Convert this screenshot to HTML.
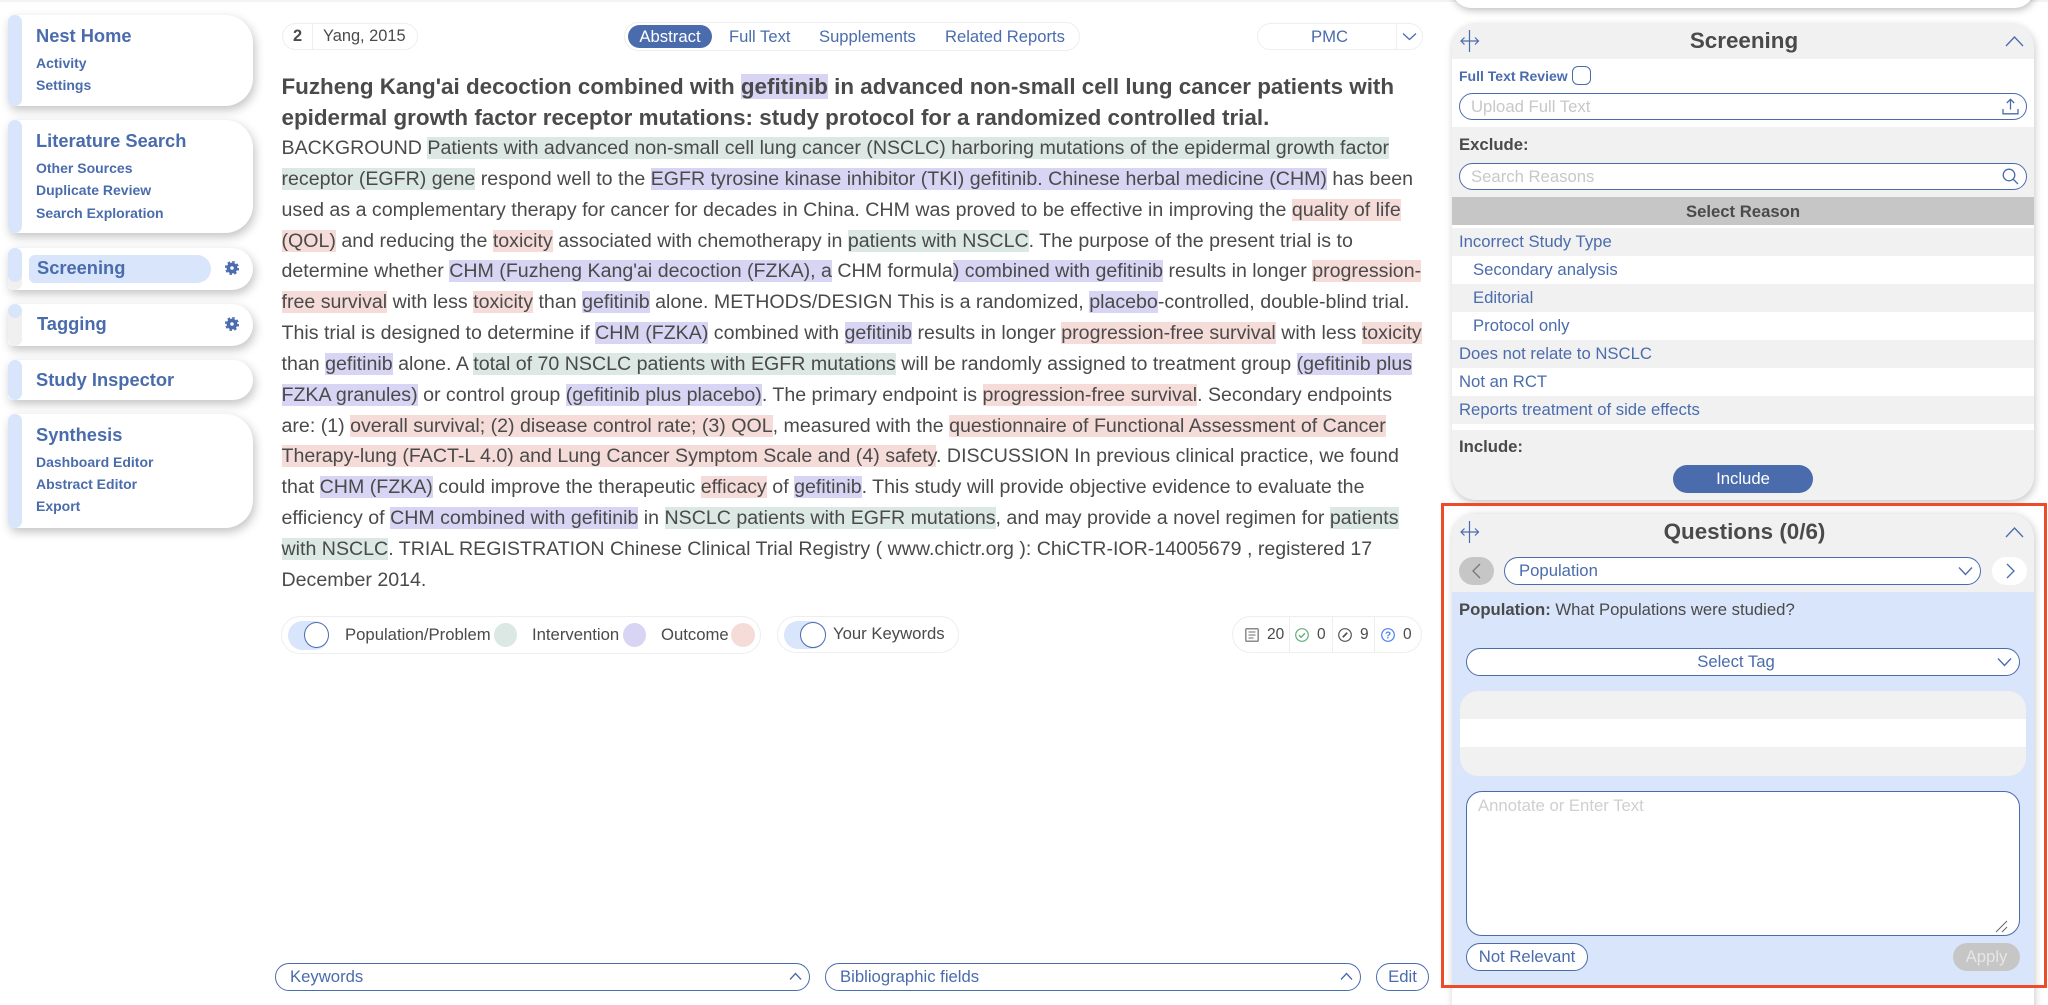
<!DOCTYPE html>
<html><head><meta charset="utf-8"><title>Screening</title>
<style>
html,body{margin:0;padding:0;background:#fff}
#p{position:relative;width:2048px;height:1005px;overflow:hidden;background:#fff;font-family:"Liberation Sans",sans-serif;color:#4a4a4a}
.a{position:absolute;white-space:nowrap;box-sizing:border-box}
.card{background:#fff;border-radius:7px 28px 28px 7px;box-shadow:2px 4px 10px rgba(0,0,0,.24);left:8px;width:245px}
.st{left:8px;width:14px;background:#d9e5fb;border-radius:7px}
.h{left:36px;color:#4a6cad;font-weight:bold;font-size:18.3px;line-height:24px;height:24px}
.s{left:36px;color:#4a6cad;font-weight:bold;font-size:14px;line-height:20px;height:20px}
.t{font-size:19.6px;line-height:30.85px}
.t div{height:30.85px;white-space:nowrap}
.g{background:#dbe8e3}.u{background:#d8d4f3}.r{background:#f5dcd9}
.pill{border:1px solid #eee;border-radius:20px;background:#fff}
.in{border:2px solid #4a6cad;background:#fff;border-radius:16px;color:#4a6cad}
.blue{color:#4a6cad}
.row{left:1452px;width:582px;height:28px;line-height:28px;font-size:16.7px;color:#4a6cad;padding-left:7px}
.gr{background:#f1f1f1}
svg{position:absolute;overflow:visible;fill:none}
</style></head><body><div id="p">
<div class="a" style="left:0;top:0;width:2048px;height:2px;background:#f3f3f3"></div>

<!-- sidebar -->
<div class="a card" style="top:15px;height:91px"></div><div class="a st" style="top:15px;height:91px"></div>
<div class="a h" style="top:24px">Nest Home</div>
<div class="a s" style="top:53px">Activity</div><div class="a s" style="top:75px">Settings</div>

<div class="a card" style="top:120px;height:113px"></div><div class="a st" style="top:120px;height:113px"></div>
<div class="a h" style="top:129px">Literature Search</div>
<div class="a s" style="top:158px">Other Sources</div><div class="a s" style="top:180px">Duplicate Review</div><div class="a s" style="top:203px">Search Exploration</div>

<div class="a card" style="top:248px;height:42px"></div>
<div class="a" style="left:8px;top:248px;width:14px;height:42px;border-radius:7px;background:#f0f0f0"></div>
<div class="a st" style="top:248px;height:34px"></div>
<div class="a" style="left:29px;top:255px;width:182px;height:28px;background:#d9e5fb;border-radius:6px 14px 14px 6px"></div>
<div class="a h" style="left:37px;top:256px">Screening</div>

<div class="a card" style="top:304px;height:42px"></div>
<div class="a" style="left:8px;top:304px;width:14px;height:42px;border-radius:7px;background:#f0f0f0"></div>
<div class="a st" style="top:304px;height:14px"></div>
<div class="a h" style="left:37px;top:312px">Tagging</div>

<div class="a card" style="top:360px;height:40px"></div><div class="a st" style="top:360px;height:40px"></div>
<div class="a h" style="top:368px">Study Inspector</div>

<div class="a card" style="top:414px;height:114px"></div><div class="a st" style="top:414px;height:114px"></div>
<div class="a h" style="top:423px">Synthesis</div>
<div class="a s" style="top:452px">Dashboard Editor</div><div class="a s" style="top:474px">Abstract Editor</div><div class="a s" style="top:496px">Export</div>

<svg style="left:225px;top:261px" width="14" height="14" viewBox="0 0 14 14"><circle cx="7" cy="7" r="3.6" stroke="#4a6cad" stroke-width="3.6"/><circle cx="7" cy="7" r="6.2" stroke="#4a6cad" stroke-width="1.7" stroke-dasharray="2.6 2.27"/></svg>
<svg style="left:225px;top:317px" width="14" height="14" viewBox="0 0 14 14"><circle cx="7" cy="7" r="3.6" stroke="#4a6cad" stroke-width="3.6"/><circle cx="7" cy="7" r="6.2" stroke="#4a6cad" stroke-width="1.7" stroke-dasharray="2.6 2.27"/></svg>

<!-- header of main -->
<div class="a pill" style="left:282px;top:23px;width:136px;height:27px"></div>
<div class="a" style="left:312px;top:24px;width:1px;height:25px;background:#eee"></div>
<div class="a" style="left:293px;top:23px;line-height:27px;font-size:16.4px;font-weight:bold">2</div>
<div class="a" style="left:323px;top:23px;line-height:27px;font-size:16.4px">Yang, 2015</div>

<div class="a pill" style="left:624px;top:22px;width:456px;height:29px"></div>
<div class="a" style="left:628px;top:25px;width:84px;height:23px;background:#4a6cad;border-radius:12px;color:#fff;font-size:16.7px;line-height:23px;text-align:center">Abstract</div>
<div class="a blue" style="left:729px;top:22px;line-height:29px;font-size:16.6px">Full Text</div>
<div class="a blue" style="left:819px;top:22px;line-height:29px;font-size:16.6px">Supplements</div>
<div class="a blue" style="left:945px;top:22px;line-height:29px;font-size:16.6px">Related Reports</div>

<div class="a pill" style="left:1257px;top:23px;width:166px;height:27px"></div>
<div class="a" style="left:1396px;top:24px;width:1px;height:25px;background:#eee"></div>
<div class="a blue" style="left:1311px;top:23px;line-height:27px;font-size:16.7px">PMC</div>
<svg style="left:1402px;top:32px" width="15" height="9" viewBox="0 0 15 9"><path d="M1 1.5L7.5 7.5L14 1.5" stroke="#4a6cad" stroke-width="1.3"/></svg>

<!-- title -->
<div class="a" style="left:281.5px;top:71px;font-size:22.4px;font-weight:bold;line-height:31px">Fuzheng Kang'ai decoction combined with <span class="u">gefitinib</span> in advanced non-small cell lung cancer patients with<br>epidermal growth factor receptor mutations: study protocol for a randomized controlled trial.</div>

<!-- body -->
<div class="a t" style="left:281.5px;top:133px">
<div>BACKGROUND <span class="g">Patients with advanced non-small cell lung cancer (NSCLC) harboring mutations of the epidermal growth factor</span></div>
<div><span class="g">receptor (EGFR) gene</span> respond well to the <span class="u">EGFR tyrosine kinase inhibitor (TKI) gefitinib. Chinese herbal medicine (CHM)</span> has been</div>
<div>used as a complementary therapy for cancer for decades in China. CHM was proved to be effective in improving the <span class="r">quality of life</span></div>
<div><span class="r">(QOL)</span> and reducing the <span class="r">toxicity</span> associated with chemotherapy in <span class="g">patients with NSCLC</span>. The purpose of the present trial is to</div>
<div>determine whether <span class="u">CHM (Fuzheng Kang'ai decoction (FZKA), a</span> CHM formula<span class="u">) combined with gefitinib</span> results in longer <span class="r">progression-</span></div>
<div><span class="r">free survival</span> with less <span class="r">toxicity</span> than <span class="u">gefitinib</span> alone. METHODS/DESIGN This is a randomized, <span class="u">placebo</span>-controlled, double-blind trial.</div>
<div>This trial is designed to determine if <span class="u">CHM (FZKA)</span> combined with <span class="u">gefitinib</span> results in longer <span class="r">progression-free survival</span> with less <span class="r">toxicity</span></div>
<div>than <span class="u">gefitinib</span> alone. A <span class="g">total of 70 NSCLC patients with EGFR mutations</span> will be randomly assigned to treatment group <span class="u">(gefitinib plus</span></div>
<div><span class="u">FZKA granules)</span> or control group <span class="u">(gefitinib plus placebo)</span>. The primary endpoint is <span class="r">progression-free survival</span>. Secondary endpoints</div>
<div>are: (1) <span class="r">overall survival; (2) disease control rate; (3) QOL</span>, measured with the <span class="r">questionnaire of Functional Assessment of Cancer</span></div>
<div><span class="r">Therapy-lung (FACT-L 4.0) and Lung Cancer Symptom Scale and (4) safety</span>. DISCUSSION In previous clinical practice, we found</div>
<div>that <span class="u">CHM (FZKA)</span> could improve the therapeutic <span class="r">efficacy</span> of <span class="u">gefitinib</span>. This study will provide objective evidence to evaluate the</div>
<div>efficiency of <span class="u">CHM combined with gefitinib</span> in <span class="g">NSCLC patients with EGFR mutations</span>, and may provide a novel regimen for <span class="g">patients</span></div>
<div><span class="g">with NSCLC</span>. TRIAL REGISTRATION Chinese Clinical Trial Registry ( www.chictr.org ): ChiCTR-IOR-14005679 , registered 17</div>
<div>December 2014.</div>
</div>

<!-- toggles -->
<div class="a pill" style="left:281px;top:616px;width:480px;height:38px"></div>
<div class="a" style="left:288px;top:621px;width:41px;height:29px;background:#d9e5fb;border-radius:15px"></div>
<div class="a" style="left:304px;top:622px;width:25px;height:26px;background:#fff;border:1.5px solid #4a6cad;border-radius:50%"></div>
<div class="a" style="left:345px;top:621px;line-height:28px;font-size:16.7px">Population/Problem</div>
<div class="a g" style="left:494px;top:623px;width:23px;height:24px;border-radius:50%"></div>
<div class="a" style="left:532px;top:621px;line-height:28px;font-size:16.7px">Intervention</div>
<div class="a u" style="left:623px;top:623px;width:23px;height:24px;border-radius:50%"></div>
<div class="a" style="left:661px;top:621px;line-height:28px;font-size:16.7px">Outcome</div>
<div class="a r" style="left:731px;top:623px;width:24px;height:24px;border-radius:50%"></div>

<div class="a pill" style="left:777px;top:616px;width:182px;height:37px"></div>
<div class="a" style="left:784px;top:621px;width:42px;height:28px;background:#d9e5fb;border-radius:15px"></div>
<div class="a" style="left:800px;top:622px;width:26px;height:26px;background:#fff;border:1.5px solid #4a6cad;border-radius:50%"></div>
<div class="a" style="left:833px;top:620px;line-height:28px;font-size:16.7px">Your Keywords</div>

<!-- stats -->
<div class="a pill" style="left:1232px;top:616px;width:190px;height:37px"></div>
<div class="a" style="left:1289px;top:617px;width:1px;height:35px;background:#eee"></div>
<div class="a" style="left:1332px;top:617px;width:1px;height:35px;background:#eee"></div>
<div class="a" style="left:1374px;top:617px;width:1px;height:35px;background:#eee"></div>
<svg style="left:1245px;top:628px" width="14" height="14" viewBox="0 0 14 14"><rect x=".8" y=".8" width="12.4" height="12.4" rx="1" stroke="#8a8a8a" stroke-width="1.5"/><path d="M3.5 4h7M3.5 7h7M3.5 10h5" stroke="#8a8a8a" stroke-width="1.2"/></svg>
<div class="a" style="left:1267px;top:621px;line-height:28px;font-size:15.5px">20</div>
<svg style="left:1295px;top:628px" width="14" height="14" viewBox="0 0 14 14"><circle cx="7" cy="7" r="6.3" stroke="#5fb077" stroke-width="1.2"/><path d="M4 7.2l2.1 2.1L10 5.2" stroke="#5fb077" stroke-width="1.4"/></svg>
<div class="a" style="left:1317px;top:621px;line-height:28px;font-size:15.5px">0</div>
<svg style="left:1338px;top:628px" width="14" height="14" viewBox="0 0 14 14"><circle cx="7" cy="7" r="6.3" stroke="#555" stroke-width="1.2"/><path d="M4.8 9.2L9.2 4.8" stroke="#555" stroke-width="1.8"/></svg>
<div class="a" style="left:1360px;top:621px;line-height:28px;font-size:15.5px">9</div>
<svg style="left:1381px;top:628px" width="14" height="14" viewBox="0 0 14 14"><circle cx="7" cy="7" r="6.3" stroke="#4d7ff0" stroke-width="1.2"/><text x="7" y="10.6" text-anchor="middle" font-family="Liberation Sans" font-weight="bold" font-size="10" fill="#4d7ff0">?</text></svg>
<div class="a" style="left:1403px;top:621px;line-height:28px;font-size:15.5px">0</div>

<!-- bottom -->
<div class="a in" style="left:275px;top:963px;width:535px;height:28px;padding-left:14px;line-height:26px;font-size:16.7px;border-width:1.5px;border-radius:14px">Keywords</div>
<svg style="left:789px;top:972px" width="13" height="9" viewBox="0 0 13 9"><path d="M1 7.5L6.5 1.5L12 7.5" stroke="#4a6cad" stroke-width="1.3"/></svg>
<div class="a in" style="left:825px;top:963px;width:536px;height:28px;padding-left:14px;line-height:26px;font-size:16.7px;border-width:1.5px;border-radius:14px">Bibliographic fields</div>
<svg style="left:1340px;top:972px" width="13" height="9" viewBox="0 0 13 9"><path d="M1 7.5L6.5 1.5L12 7.5" stroke="#4a6cad" stroke-width="1.3"/></svg>
<div class="a in" style="left:1376px;top:963px;width:53px;height:28px;text-align:center;line-height:26px;font-size:16.7px;border-width:1.5px;border-radius:14px">Edit</div>

<!-- top right card -->
<div class="a" style="left:1452px;top:-30px;width:582px;height:38px;background:#fff;border-radius:20px;box-shadow:1px 2px 8px rgba(0,0,0,.28)"></div>

<!-- screening panel -->
<div class="a gr" style="left:1452px;top:23px;width:582px;height:477px;border-radius:24px;box-shadow:1px 3px 8px rgba(0,0,0,.22)"></div>
<div class="a" style="left:1452px;top:59px;width:582px;height:68px;background:#fff"></div>
<div class="a" style="left:1453px;top:23px;width:582px;height:36px;text-align:center;line-height:36px;font-size:22.4px;font-weight:bold">Screening</div>
<svg style="left:1460px;top:30px" width="20" height="22" viewBox="0 0 20 22"><path d="M9.5 0V22M1 11H18.5M4.5 7.5L1 11L4.5 14.5M15 7.5L18.5 11L15 14.5" stroke="#4a6cad" stroke-width="1.2"/></svg>
<svg style="left:2005px;top:35px" width="19" height="12" viewBox="0 0 19 12"><path d="M1 11L9.5 2L18 11" stroke="#4a6cad" stroke-width="1.3"/></svg>
<div class="a" style="left:1459px;top:66px;line-height:20px;font-size:14px;font-weight:bold;color:#4a6cad">Full Text Review</div>
<div class="a" style="left:1572px;top:66px;width:19px;height:19px;border:1.5px solid #4a6cad;border-radius:6px;background:#fff"></div>
<div class="a in" style="left:1459px;top:93px;width:568px;height:27px;line-height:26px;padding-left:11px;font-size:16.7px;color:#c8c8c8;border-width:1.5px;border-radius:14px">Upload Full Text</div>
<svg style="left:2002px;top:98px" width="17" height="17" viewBox="0 0 17 17"><path d="M8.5 11.5V1.5M4.8 5L8.5 1.3L12.2 5M1 11V15.8H16V11" stroke="#4a6cad" stroke-width="1.3"/></svg>
<div class="a" style="left:1459px;top:135px;line-height:20px;font-size:16.7px;font-weight:bold">Exclude:</div>
<div class="a in" style="left:1459px;top:163px;width:568px;height:27px;line-height:26px;padding-left:11px;font-size:16.7px;color:#c8c8c8;border-width:1.5px;border-radius:14px">Search Reasons</div>
<svg style="left:2002px;top:168px" width="17" height="17" viewBox="0 0 17 17"><circle cx="7" cy="7" r="5.8" stroke="#4a6cad" stroke-width="1.3"/><path d="M11 11L16 16" stroke="#4a6cad" stroke-width="1.3"/></svg>
<div class="a" style="left:1452px;top:197px;width:582px;height:28px;background:#c6c6c6;text-align:center;line-height:30px;font-size:16.7px;font-weight:bold">Select Reason</div>
<div class="a" style="left:1452px;top:225px;width:582px;height:205px;background:#fff"></div>
<div class="a row gr" style="top:228px">Incorrect Study Type</div>
<div class="a row" style="top:256px;padding-left:21px">Secondary analysis</div>
<div class="a row gr" style="top:284px;padding-left:21px">Editorial</div>
<div class="a row" style="top:312px;padding-left:21px">Protocol only</div>
<div class="a row gr" style="top:340px">Does not relate to NSCLC</div>
<div class="a row" style="top:368px">Not an RCT</div>
<div class="a row gr" style="top:396px">Reports treatment of side effects</div>
<div class="a" style="left:1459px;top:437px;line-height:20px;font-size:16.7px;font-weight:bold">Include:</div>
<div class="a" style="left:1673px;top:465px;width:140px;height:28px;background:#4a6cad;color:#fff;border-radius:14px;text-align:center;line-height:28px;font-size:16.7px">Include</div>

<!-- questions panel -->
<div class="a" style="left:1452px;top:514px;width:582px;height:520px;background:#fff;border-radius:24px 24px 0 0;box-shadow:1px 1px 8px rgba(0,0,0,.22)"></div>
<div class="a gr" style="left:1452px;top:514px;width:582px;height:78px;border-radius:24px 24px 0 0"></div>
<div class="a" style="left:1452px;top:592px;width:582px;height:393px;background:#d9e5fb"></div>
<div class="a" style="left:1453.5px;top:514px;width:582px;height:36px;text-align:center;line-height:36px;font-size:22.4px;font-weight:bold">Questions (0/6)</div>
<svg style="left:1460px;top:521px" width="20" height="22" viewBox="0 0 20 22"><path d="M9.5 0V22M1 11H18.5M4.5 7.5L1 11L4.5 14.5M15 7.5L18.5 11L15 14.5" stroke="#4a6cad" stroke-width="1.2"/></svg>
<svg style="left:2005px;top:526px" width="19" height="12" viewBox="0 0 19 12"><path d="M1 11L9.5 2L18 11" stroke="#4a6cad" stroke-width="1.3"/></svg>
<div class="a" style="left:1459px;top:557px;width:35px;height:28px;background:#c6c6c6;border-radius:14px"></div>
<svg style="left:1472px;top:563px" width="9" height="16" viewBox="0 0 9 16"><path d="M8 1L1 8L8 15" stroke="#777" stroke-width="1.3"/></svg>
<div class="a in" style="left:1504px;top:557px;width:477px;height:28px;line-height:26px;padding-left:14px;font-size:16.7px;border-width:1.5px;border-radius:14px">Population</div>
<svg style="left:1958px;top:566px" width="15" height="10" viewBox="0 0 15 10"><path d="M1 1.5L7.5 8.5L14 1.5" stroke="#4a6cad" stroke-width="1.3"/></svg>
<div class="a" style="left:1992px;top:557px;width:35px;height:28px;background:#fff;border-radius:14px"></div>
<svg style="left:2006px;top:563px" width="9" height="16" viewBox="0 0 9 16"><path d="M1 1L8 8L1 15" stroke="#4a6cad" stroke-width="1.3"/></svg>
<div class="a" style="left:1459px;top:600px;line-height:20px;font-size:16.7px"><b>Population:</b> What Populations were studied?</div>
<div class="a in" style="left:1466px;top:648px;width:554px;height:28px;line-height:26px;text-align:center;padding-right:14px;font-size:16.7px;border-width:1.5px;border-radius:14px">Select Tag</div>
<svg style="left:1997px;top:657px" width="15" height="10" viewBox="0 0 15 10"><path d="M1 1.5L7.5 8.5L14 1.5" stroke="#4a6cad" stroke-width="1.3"/></svg>
<div class="a gr" style="left:1460px;top:691px;width:566px;height:85px;border-radius:18px;overflow:hidden"><div style="margin-top:28px;height:28px;background:#fff"></div></div>
<div class="a in" style="left:1466px;top:791px;width:554px;height:145px;border-width:1.5px;border-radius:16px;padding:4px 11px;font-size:16.7px;line-height:20px;color:#cfcfcf">Annotate or Enter Text</div>
<svg style="left:1995px;top:920px" width="13" height="13" viewBox="0 0 13 13"><path d="M1 12L12 1M7 12L12 7" stroke="#666" stroke-width="1"/></svg>
<div class="a in" style="left:1466px;top:943px;width:122px;height:28px;line-height:26px;text-align:center;font-size:16.7px;border-width:1.5px;border-radius:14px">Not Relevant</div>
<div class="a" style="left:1953px;top:943px;width:67px;height:28px;background:#c6c6c6;color:#e6e6e6;border-radius:14px;text-align:center;line-height:28px;font-size:16.7px">Apply</div>

<!-- red highlight -->
<div class="a" style="left:1441px;top:503px;width:606px;height:485px;border:3px solid #ee4b2b"></div>
</div></body></html>
